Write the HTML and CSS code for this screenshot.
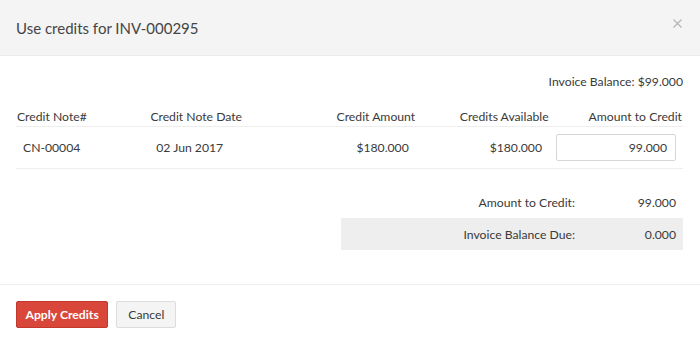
FILE: index.html
```html
<!DOCTYPE html>
<html>
<head>
<meta charset="utf-8">
<link rel="stylesheet" href="styles.css">
</head>
<body>
<div class="modal">
  <div class="modal-header">
    <h4 class="title">Use credits for INV-000295</h4>
    <span class="close" aria-label="Close">
      <svg width="9" height="9" viewBox="0 0 9 9"><path d="M0.5 0.5 L8.5 8.5 M8.5 0.5 L0.5 8.5" stroke="#b3b3b3" stroke-width="1.1" fill="none"/></svg>
    </span>
  </div>
  <div class="modal-body">
    <div class="balance">Invoice Balance: $99.000</div>
    <div class="grid head">
      <div class="cell">Credit Note#</div>
      <div class="cell">Credit Note Date</div>
      <div class="cell right">Credit Amount</div>
      <div class="cell right">Credits Available</div>
      <div class="cell right">Amount to Credit</div>
    </div>
    <div class="grid row">
      <div class="cell">CN-00004</div>
      <div class="cell">02 Jun 2017</div>
      <div class="cell right">$180.000</div>
      <div class="cell right">$180.000</div>
      <div class="cell right"><input class="amount" type="text" value="99.000"></div>
    </div>
    <div class="summary">
      <div class="sum-row">
        <div class="sum-label">Amount to Credit:</div>
        <div class="sum-value">99.000</div>
      </div>
      <div class="sum-row shaded">
        <div class="sum-label">Invoice Balance Due:</div>
        <div class="sum-value">0.000</div>
      </div>
    </div>
  </div>
  <div class="modal-footer">
    <button class="btn btn-primary">Apply Credits</button>
    <button class="btn btn-default">Cancel</button>
  </div>
</div>
</body>
</html>
```
FILE: styles.css
```css
* { box-sizing: border-box; }
html, body { margin: 0; padding: 0; background: #fff; }
body {
  font-family: "Lato", "Liberation Sans", sans-serif;
  font-size: 12.2px;
  color: #3a3a3a;
}
.modal { width: 700px; height: 344px; display: flex; flex-direction: column; }
.modal-header {
  height: 56px;
  background: #f4f4f4;
  border-bottom: 1px solid #ececec;
  display: flex;
  align-items: center;
  justify-content: space-between;
  padding: 0 18px 0 16px;
}
.title { margin: 0; font-size: 15px; font-weight: normal; color: #454545; }
.close { display: flex; margin-top: -8px; }
.modal-body { padding: 16px 17px 0 16px; }
.balance { text-align: right; line-height: 20px; }
.grid { display: grid; grid-template-columns: repeat(5, 1fr); }
.head { margin-top: 16px; line-height: 18px; border-bottom: 1px solid #eeeeee; }
.head .cell { padding: 0 1px; }
.row { border-bottom: 1px solid #eeeeee; align-items: center; }
.row .cell { padding: 7px 7px; line-height: 27px; }
.right { text-align: right; }
.amount {
  width: 120px;
  height: 27px;
  border: 1px solid #d6d6d6;
  border-radius: 2px;
  padding: 0 8px;
  font: inherit;
  color: #3a3a3a;
  text-align: right;
  display: block;
  margin-left: auto;
}
.summary { margin: 17px 0 0 auto; width: 342px; }
.sum-row { display: flex; height: 32px; align-items: center; }
.sum-row.shaded { background: #eeeeee; }
.sum-label { flex: 1; text-align: right; padding-right: 8px; }
.sum-value { width: 100px; text-align: right; padding-right: 7px; }
.modal-footer {
  margin-top: auto;
  border-top: 1px solid #eeeeee;
  padding: 16px 16px 16px;
  display: flex;
  gap: 8px;
}
.btn {
  height: 27px;
  font-family: inherit;
  font-size: 12.2px;
  border-radius: 2px;
  padding: 0 8.5px;
  cursor: pointer;
}
.btn-primary { background: #d8473a; border: 1px solid #c2382c; color: #fff; font-weight: bold; }
.btn-default { background: #f4f4f4; border: 1px solid #dcdcdc; color: #3a3a3a; padding: 0 11px; }
```
